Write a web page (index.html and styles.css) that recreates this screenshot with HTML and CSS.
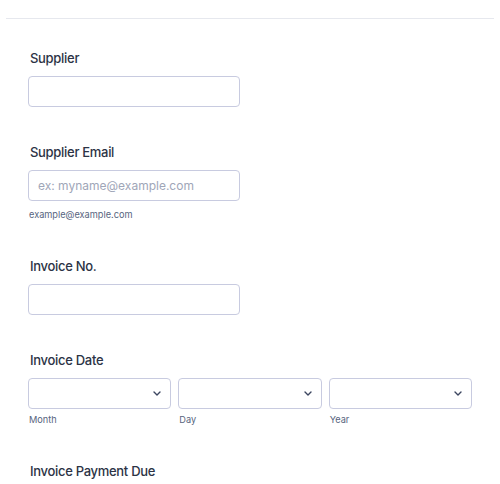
FILE: index.html
```html
<!DOCTYPE html>
<html>
<head>
<meta charset="utf-8">
<link rel="stylesheet" href="styles.css">
</head>
<body>
<div class="topline"></div>
<form class="form">
  <div class="field">
    <label class="label">Supplier</label>
    <div class="input"></div>
  </div>
  <div class="field">
    <label class="label">Supplier Email</label>
    <div class="input"><span class="ph">ex: myname@example.com</span></div>
    <div class="sub">example@example.com</div>
  </div>
  <div class="field">
    <label class="label">Invoice No.</label>
    <div class="input"></div>
  </div>
  <div class="field">
    <label class="label">Invoice Date</label>
    <div class="dates">
      <div class="dcol">
        <div class="select"><svg class="chev" width="8" height="5" viewBox="0 0 8 5"><path d="M1 1l3 3 3-3" fill="none" stroke="#3c4660" stroke-width="1.4" stroke-linecap="round" stroke-linejoin="round"/></svg></div>
        <div class="sub">Month</div>
      </div>
      <div class="dcol">
        <div class="select"><svg class="chev" width="8" height="5" viewBox="0 0 8 5"><path d="M1 1l3 3 3-3" fill="none" stroke="#3c4660" stroke-width="1.4" stroke-linecap="round" stroke-linejoin="round"/></svg></div>
        <div class="sub">Day</div>
      </div>
      <div class="dcol">
        <div class="select"><svg class="chev" width="8" height="5" viewBox="0 0 8 5"><path d="M1 1l3 3 3-3" fill="none" stroke="#3c4660" stroke-width="1.4" stroke-linecap="round" stroke-linejoin="round"/></svg></div>
        <div class="sub">Year</div>
      </div>
    </div>
  </div>
  <div class="field">
    <label class="label">Invoice Payment Due</label>
  </div>
</form>
</body>
</html>
```
FILE: styles.css
```css
html, body {
  margin: 0;
  padding: 0;
  background: #fff;
  font-family: Inter, "Liberation Sans", sans-serif;
  color: #2c3345;
}
.topline {
  margin: 0 6px;
  height: 18px;
  border-bottom: 1px solid #e6e8ee;
}
.form {
  padding: 30px 28px 0 28px;
}
.field {
  margin-bottom: 36px;
}
.label {
  display: block;
  font-size: 13px;
  letter-spacing: -0.3px;
  line-height: 16px;
  font-weight: 500;
  color: #2c3345;
  padding: 1px 0 0 2px;
  margin-bottom: 10px;
}
.input {
  box-sizing: border-box;
  width: 212px;
  height: 31px;
  border: 1px solid #c8cbe0;
  border-radius: 4px;
  display: flex;
  align-items: center;
  padding-left: 9px;
}
.ph {
  font-size: 12px;
  color: #a0a6b8;
}
.sub {
  font-size: 9.2px;
  line-height: 12px;
  color: #57647e;
  margin-top: 8px;
  padding-left: 1px;
}
.dates {
  display: flex;
  gap: 7px;
  width: 444px;
}
.dcol {
  flex: 1;
}
.dcol .sub {
  margin-top: 5px;
}
.select {
  box-sizing: border-box;
  height: 31px;
  border: 1px solid #c8cbe0;
  border-radius: 4px;
  display: flex;
  align-items: center;
  justify-content: flex-end;
  padding-right: 9px;
}
.chev {
  display: block;
}
```
